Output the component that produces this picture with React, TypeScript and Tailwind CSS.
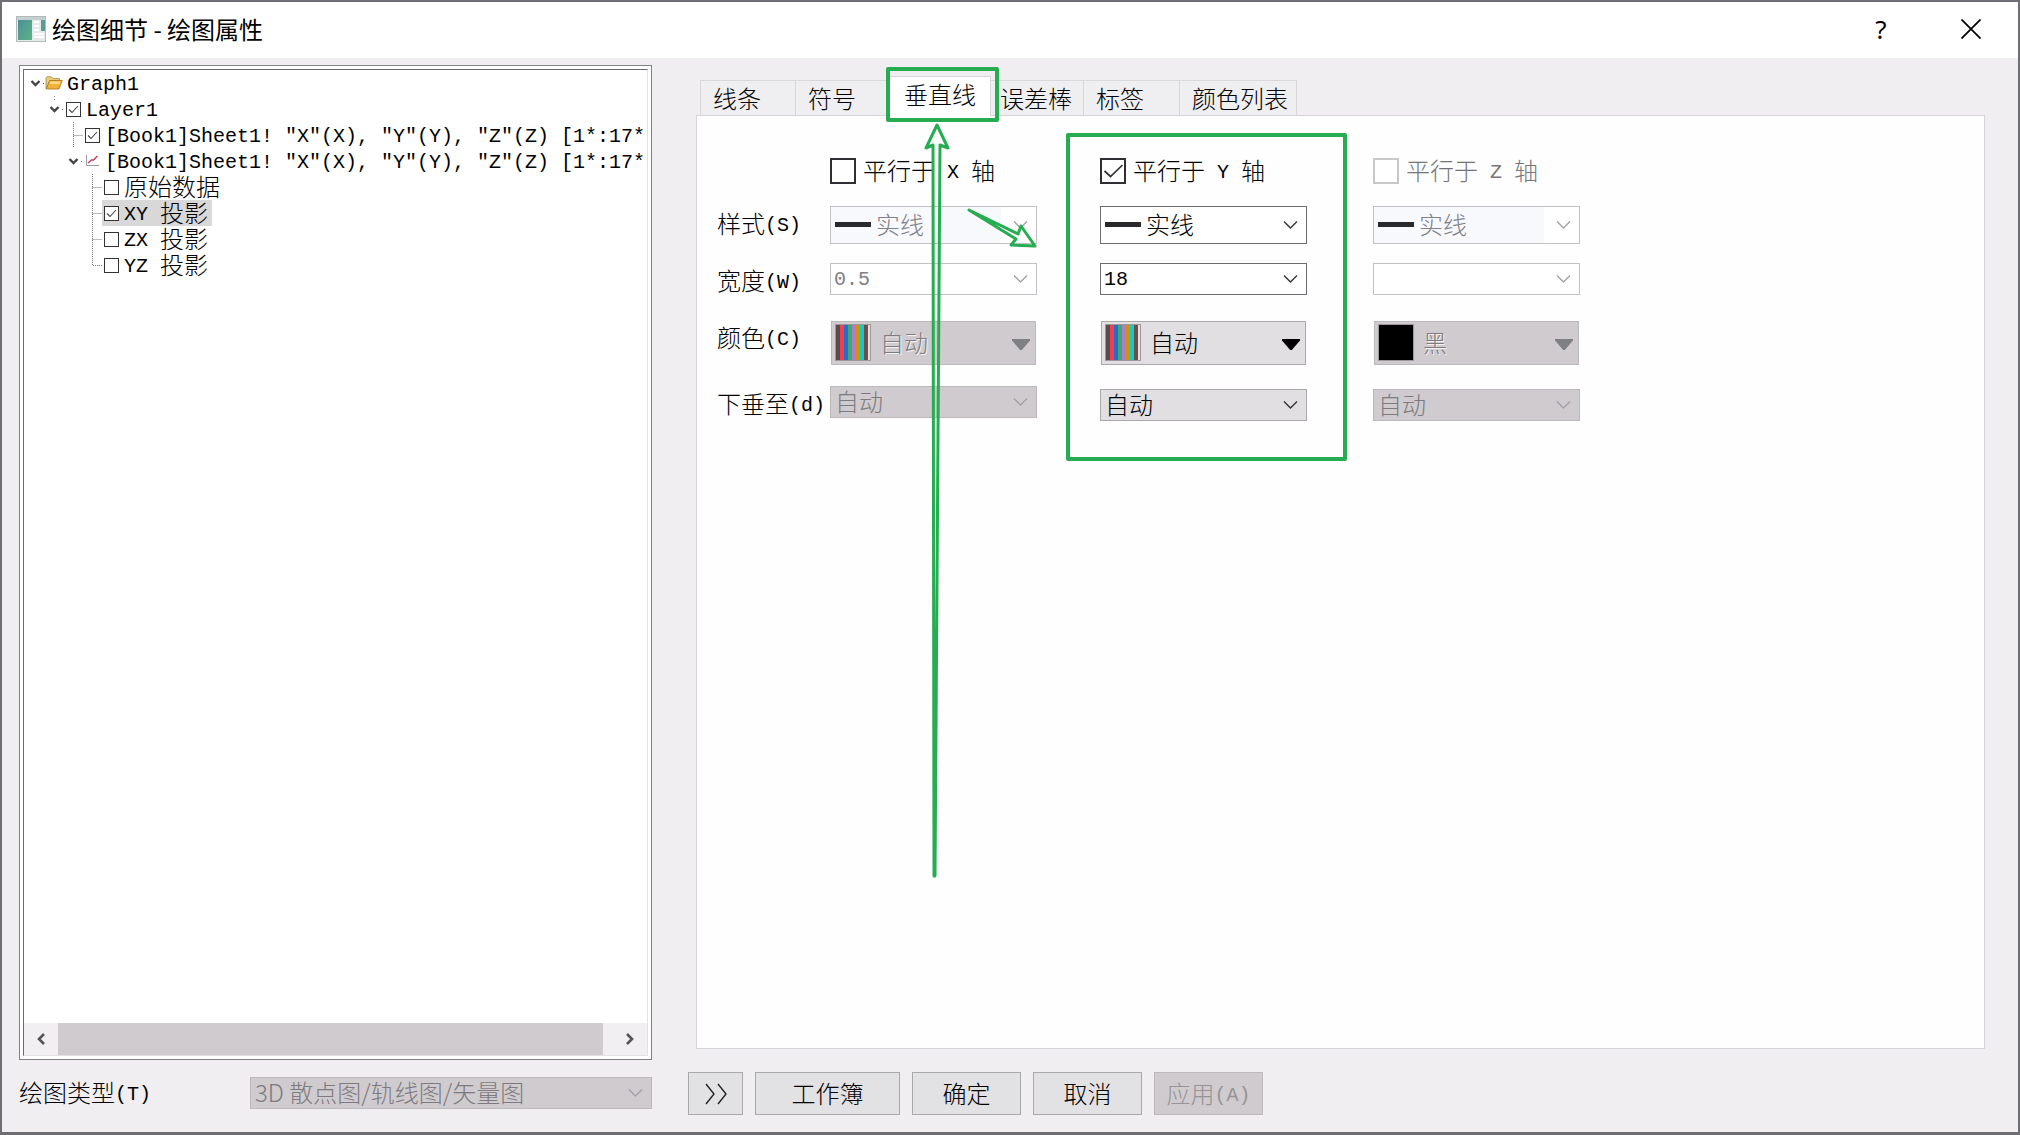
import React from "react";

const CJK_RUN = /([\u3000-\u9fff]+)/;

/* Latin cells are half as wide as the ideographs, as in a terminal-style dialog font. */
function Txt({ children }: { children: string }) {
  return (
    <span className="inline-flex h-[26px] items-center align-middle whitespace-pre leading-[26px]">
      {children.split(CJK_RUN).map((run, i) =>
        run === "" ? null : i % 2 === 1 ? (
          <span key={i} className="pb-[2px] font-['Noto_Sans_CJK_SC',sans-serif] text-[24px] font-light leading-6">
            {run}
          </span>
        ) : (
          <span key={i} className="pt-1 font-['Liberation_Mono','Noto_Sans_CJK_SC',monospace] text-[20px] leading-6">
            {run}
          </span>
        ),
      )}
    </span>
  );
}

function Chevron({ className }: { className: string }) {
  return (
    <svg className={`pointer-events-none absolute top-1/2 right-[9px] -translate-y-1/2 ${className}`} width="15" height="10" viewBox="0 0 15 10" fill="none" stroke="currentColor" strokeWidth="1.4">
      <path d="M1 1.5 L7.5 8 L14 1.5" />
    </svg>
  );
}

function Triangle({ className }: { className: string }) {
  return (
    <svg className={`pointer-events-none absolute top-[18px] right-[6px] ${className}`} width="18" height="11" viewBox="0 0 18 11" fill="currentColor">
      <path d="M0 0 H18 V1.5 L9.8 11 H8.2 L0 1.5 Z" />
    </svg>
  );
}

const STRIPES = ["#5c4a4a", "#ee4050", "#2a6cc4", "#3fa878", "#b07ccc", "#cf930f", "#1fc6bd", "#6b5050", "#ecdcdc"];

function Swatch({ kind }: { kind: "auto" | "black" }) {
  return (
    <svg className="pointer-events-none absolute top-[3px] left-[4px]" width="36" height="37" viewBox="0 0 36 37">
      <rect x="0.5" y="0.5" width="35" height="36" fill={kind === "black" ? "#000" : "#e6d8d8"} stroke="#9b979a" />
      {kind === "auto" && STRIPES.map((c, i) => <rect key={c} x={1 + i * 4} y="1" width={i === 8 ? 2 : 4} height="35" fill={c} />)}
    </svg>
  );
}

type PickProps = {
  label: string;
  value: string;
  kind?: "line" | "edit" | "color" | "list";
  disabled?: boolean;
  swatch?: "auto" | "black";
};

function Pick({ label, value, kind = "list", disabled = false, swatch = "auto" }: PickProps) {
  const height = kind === "line" ? "h-[38px]" : kind === "color" ? "h-[44px]" : "h-[32px]";
  const pad =
    kind === "line" ? "pl-[45px] pb-[2px]" : kind === "color" ? "pl-12 pb-[2px]" : kind === "edit" ? "pl-[3px] pt-[2px]" : "pl-1 pb-[2px]";
  const font = kind === "edit" ? "text-[20px] font-['Liberation_Mono',monospace]" : "text-[24px] font-light font-['Noto_Sans_CJK_SC',sans-serif]";
  const flat = kind === "line" || kind === "edit";
  const colors = flat
    ? disabled
      ? "border-[#c3c1c6] text-[#808086]"
      : "bg-white border-[#6c6b70] text-black"
    : disabled
      ? "bg-[#cfcbce] border-[#bcb8bb] text-[#7d7b80]"
      : "bg-[#e1dfe2] border-[#aaa8ab] text-black";
  const tint = flat && disabled ? (kind === "line" ? "bg-[linear-gradient(to_right,#f7f9fd_170px,#ffffff_170px)]" : "bg-white") : "";
  return (
    <div className={`relative ${kind === "color" ? "mx-px" : ""}`}>
      <select
        aria-label={label}
        disabled={disabled}
        defaultValue={value}
        className={`block w-full appearance-none rounded-none border pr-7 leading-[28px] opacity-100 outline-none ${height} ${pad} ${font} ${colors} ${tint} ${kind === "color" && disabled ? "[text-shadow:1px_1px_0_#f4f2f4]" : ""}`}
      >
        <option>{value}</option>
      </select>
      {kind === "line" && <span className="pointer-events-none absolute top-4 left-[5px] h-[5px] w-9 bg-[#2a2a2d]" />}
      {kind === "color" && <Swatch kind={swatch} />}
      {kind === "color" ? (
        <Triangle className={disabled ? "text-[#808084]" : "text-black"} />
      ) : (
        <Chevron className={disabled ? "text-[#a3a1a6]" : "text-[#333]"} />
      )}
    </div>
  );
}

function Tick({ label, checked = false, disabled = false }: { label: string; checked?: boolean; disabled?: boolean }) {
  return (
    <label className={`flex h-[26px] items-center gap-[7px] ${disabled ? "text-[#77757a]" : "text-black"}`}>
      <span className="relative size-[26px] shrink-0">
        <input
          type="checkbox"
          defaultChecked={checked}
          disabled={disabled}
          className={`block size-[26px] appearance-none border-2 bg-white ${disabled ? "border-[#c9c7ca]" : "border-[#2f2e33]"}`}
        />
        {checked && (
          <svg className="pointer-events-none absolute inset-0" width="26" height="26" viewBox="0 0 26 26" fill="none" stroke="#333" strokeWidth="1.7">
            <path d="M4.5 13 L10.5 18.5 L22.5 7" />
          </svg>
        )}
      </span>
      <Txt>{label}</Txt>
    </label>
  );
}

type Node = {
  text: string;
  level: number;
  lead: "open" | "branch" | "last";
  icon: "folder" | "on" | "off" | "plot";
  selected?: boolean;
};

const NODES: Node[] = [
  { text: "Graph1", level: 0, lead: "open", icon: "folder" },
  { text: "Layer1", level: 1, lead: "open", icon: "on" },
  { text: '[Book1]Sheet1! "X"(X), "Y"(Y), "Z"(Z) [1*:17*', level: 2, lead: "branch", icon: "on" },
  { text: '[Book1]Sheet1! "X"(X), "Y"(Y), "Z"(Z) [1*:17*', level: 2, lead: "open", icon: "plot" },
  { text: "原始数据", level: 3, lead: "branch", icon: "off" },
  { text: "XY 投影", level: 3, lead: "branch", icon: "on", selected: true },
  { text: "ZX 投影", level: 3, lead: "branch", icon: "off" },
  { text: "YZ 投影", level: 3, lead: "last", icon: "off" },
];

const INDENT = ["pl-[2px]", "pl-[21px]", "pl-[40px]", "pl-[59px]"];

function TreeIcon({ icon, text }: { icon: Node["icon"]; text: string }) {
  if (icon === "folder")
    return (
      <svg width="18" height="14" viewBox="0 0 18 14">
        <path d="M1 12.5 V2 L2 0.8 H6.5 L8 2.5 H14.5 V5 H5 Z" fill="#e9cf7c" stroke="#a98a3c" strokeWidth="0.8" />
        <path d="M4.5 4.5 H17.3 L14 13 H1.3 Z" fill="#f0b03c" stroke="#a87417" strokeWidth="0.8" />
        <path d="M5.5 5.6 H15.5 L14.6 8 H4.5 Z" fill="#fbd98a" />
      </svg>
    );
  if (icon === "plot")
    return (
      <svg width="14" height="12" viewBox="0 0 14 12" fill="none" className="mx-[2px]">
        <path d="M1.5 0 V10.5 H14" stroke="#9a98a0" strokeWidth="1" />
        <path d="M3 8 L6.5 5 L8.5 5 L12.5 1" stroke="#c2405a" strokeWidth="1.4" />
      </svg>
    );
  return (
    <span className="relative mx-[2px] size-[15px]">
      <input type="checkbox" aria-label={text} defaultChecked={icon === "on"} className="block size-[15px] appearance-none border border-[#333] bg-white" />
      {icon === "on" && (
        <svg className="pointer-events-none absolute inset-0" width="15" height="15" viewBox="0 0 15 15" fill="none" stroke="#444" strokeWidth="1.1">
          <path d="M3 7.5 L6 10.5 L12 4" />
        </svg>
      )}
    </span>
  );
}

function TreeRow({ node }: { node: Node }) {
  return (
    <li className={`flex h-[26px] ${INDENT[node.level]}`}>
      <svg className="shrink-0" width="19" height="26" viewBox="0 0 19 26" fill="none">
        {node.lead === "open" ? (
          <>
            <path d="M5.5 11 L9.5 15 L13.5 11" stroke="#444" strokeWidth="2.4" />
            <path d="M17.5 13 V14" stroke="#666" />
            {node.level === 1 && <path d="M9.5 0 V5" stroke="#888" strokeDasharray="1 2" />}
          </>
        ) : (
          <path d={node.lead === "last" ? "M9.5 0 V13.5 H19" : "M9.5 0 V26 M9.5 13.5 H19"} stroke="#777" strokeDasharray="1 1" />
        )}
      </svg>
      <span className={`flex items-center ${node.selected ? "bg-[#d8d8d8] pr-1" : ""}`}>
        <span className="flex w-[22px] shrink-0 items-center">
          <TreeIcon icon={node.icon} text={node.text} />
        </span>
        <Txt>{node.text}</Txt>
      </span>
    </li>
  );
}

const TABS = ["线条", "符号", "垂直线", "误差棒", "标签", "颜色列表"];

function Tab({ name }: { name: string }) {
  if (name === "垂直线")
    return (
      <div className="relative z-10 -mx-[3px] -mb-px">
        <button role="tab" aria-selected="true" className="block h-10 w-[102px] border border-b-0 border-[#d9d7da] bg-white pb-1">
          <Txt>{name}</Txt>
        </button>
        <div className="pointer-events-none absolute -top-[9px] -right-2 -bottom-[6px] -left-[3px] rounded-[2px] border-4 border-[#27ad51]" />
      </div>
    );
  return (
    <button role="tab" aria-selected="false" className="h-[35px] min-w-24 border-t border-r border-[#d9d7da] bg-[#efeef0] pt-[2px] pl-3 text-left first:border-l last:pr-2">
      <Txt>{name}</Txt>
    </button>
  );
}

function Push({ children, className = "w-[109px]", disabled = false }: { children: React.ReactNode; className?: string; disabled?: boolean }) {
  return (
    <button
      disabled={disabled}
      className={`flex h-[43px] items-center justify-center border ${className} ${disabled ? "border-[#bcb8bb] bg-[#cfcbce] text-[#969397]" : "border-[#aaa8ab] bg-[#e2e1e4] text-black"}`}
    >
      {children}
    </button>
  );
}

export default function App() {
  return (
    <div className="flex min-h-screen flex-col border-2 border-b-[3px] border-[#6f6e73] bg-[#f0eef1] text-black">
      <header className="flex h-14 items-center bg-white pb-[2px] pl-[14px]">
        <svg width="30" height="26" viewBox="0 0 30 26">
          <defs>
            <linearGradient id="pane" x1="0" y1="0" x2="1" y2="1">
              <stop offset="0" stopColor="#4f8f9a" />
              <stop offset="1" stopColor="#5bb385" />
            </linearGradient>
          </defs>
          <rect x="0.5" y="0.5" width="29" height="25" fill="#e4eae9" stroke="#b3b9b9" />
          <rect x="1" y="1" width="28" height="3" fill="#c6d0d2" />
          <rect x="2" y="4" width="14" height="20" fill="url(#pane)" />
          <path d="M18 6 H23 M18 10 H23 M18 14 H23 M18 18 H28 M18 21 H28" stroke="#fff" strokeWidth="2" />
          <rect x="25" y="4" width="4" height="11" fill="#5a9c94" />
        </svg>
        <h1 className="ml-[6px] flex-1 font-['Noto_Sans_CJK_SC',sans-serif] text-[24px] leading-8">绘图细节 - 绘图属性</h1>
        <button aria-label="帮助" className="w-12 font-['Noto_Sans',sans-serif] text-[26px] leading-8">?</button>
        <button aria-label="关闭" className="mr-[35px] ml-[54px] flex h-8 w-6 items-center justify-center">
          <svg width="20" height="20" viewBox="0 0 20 20" stroke="#000" strokeWidth="1.8">
            <path d="M0.5 0.5 L19.5 19.5 M19.5 0.5 L0.5 19.5" />
          </svg>
        </button>
      </header>

      <main className="flex flex-1 gap-9 pt-[7px] pr-[33px] pl-[17px]">
        <section className="flex w-[633px] shrink-0 flex-col pb-[23px]">
          <div className="flex flex-1 flex-col border border-[#828187] bg-white p-[3px]">
            <div className="flex flex-1 flex-col overflow-hidden border border-t-[#69686d] border-r-[#e3e1e4] border-b-[#e3e1e4] border-l-[#69686d]">
              <ul className="flex-1 overflow-hidden">
                {NODES.map((n, i) => (
                  <TreeRow key={i} node={n} />
                ))}
              </ul>
              <div className="flex h-8 bg-[#f1eff1]">
                <button aria-label="向左滚动" className="flex w-[34px] items-center justify-center">
                  <svg width="10" height="12" viewBox="0 0 10 12" fill="none" stroke="#555" strokeWidth="2.6">
                    <path d="M8 1 L3 6 L8 11" />
                  </svg>
                </button>
                <div className="mr-[10px] flex-1 bg-[#cfcbce]" />
                <button aria-label="向右滚动" className="flex w-[34px] items-center justify-center">
                  <svg width="10" height="12" viewBox="0 0 10 12" fill="none" stroke="#555" strokeWidth="2.6">
                    <path d="M2 1 L7 6 L2 11" />
                  </svg>
                </button>
              </div>
            </div>
          </div>
          <div className="mt-[17px] flex h-8 items-center">
            <span className="w-[231px]">
              <Txt>绘图类型(T)</Txt>
            </span>
            <div className="flex-1">
              <Pick label="绘图类型(T)" value="3D 散点图/轨线图/矢量图" disabled />
            </div>
          </div>
        </section>

        <section className="flex min-w-0 flex-1 flex-col pb-[17px]">
          <div role="tablist" className="ml-3 flex h-[50px] items-end">
            {TABS.map((t) => (
              <Tab key={t} name={t} />
            ))}
          </div>

          <div className="relative ml-2 flex-1 border border-[#d6d4d8] bg-[#fefefe] pt-[42px] pl-5">
            <div className="flex">
              <div className="flex w-[113px] flex-col">
                <div className="mt-[53px] flex"><Txt>样式(S)</Txt></div>
                <div className="mt-[31px] flex"><Txt>宽度(W)</Txt></div>
                <div className="mt-[31px] flex"><Txt>颜色(C)</Txt></div>
                <div className="mt-10 flex"><Txt>下垂至(d)</Txt></div>
              </div>

              <fieldset className="flex w-[207px] flex-col">
                <Tick label="平行于 X 轴" />
                <div className="mt-[22px]"><Pick kind="line" label="X 样式" value="实线" disabled /></div>
                <div className="mt-[19px]"><Pick kind="edit" label="X 宽度" value="0.5" disabled /></div>
                <div className="mt-[26px]"><Pick kind="color" label="X 颜色" value="自动" disabled /></div>
                <div className="mt-[21px]"><Pick label="X 下垂至" value="自动" disabled /></div>
              </fieldset>

              <fieldset className="relative ml-[63px] flex w-[207px] flex-col">
                <Tick label="平行于 Y 轴" checked />
                <div className="mt-[22px]"><Pick kind="line" label="Y 样式" value="实线" /></div>
                <div className="mt-[19px]"><Pick kind="edit" label="Y 宽度" value="18" /></div>
                <div className="mt-[26px]"><Pick kind="color" label="Y 颜色" value="自动" /></div>
                <div className="mt-6"><Pick label="Y 下垂至" value="自动" /></div>
                <div className="pointer-events-none absolute -top-[25px] -right-10 -bottom-10 -left-[34px] rounded-[2px] border-4 border-[#27ad51]" />
              </fieldset>

              <fieldset className="ml-[66px] flex w-[207px] flex-col">
                <Tick label="平行于 Z 轴" disabled />
                <div className="mt-[22px]"><Pick kind="line" label="Z 样式" value="实线" disabled /></div>
                <div className="mt-[19px]"><Pick kind="edit" label="Z 宽度" value="" disabled /></div>
                <div className="mt-[26px]"><Pick kind="color" label="Z 颜色" value="黑" swatch="black" disabled /></div>
                <div className="mt-6"><Pick label="Z 下垂至" value="自动" disabled /></div>
              </fieldset>
            </div>

            <svg className="pointer-events-none absolute top-1 left-[220px]" width="130" height="764" viewBox="917 120 130 764" fill="none" stroke="#27ad51" strokeWidth="3" strokeLinejoin="round">
              <path d="M934 876 L933 145 L926 148 L937 125 L948 148 L940 145 L935 876 Z" />
              <path d="M969 210 L1018 234 L1021 226 L1035 246 L1011 245 L1016 239 Z" />
            </svg>
          </div>

          <div className="mt-[23px] flex gap-3">
            <Push className="w-[55px]">
              <svg aria-label="展开" width="22" height="22" viewBox="0 0 22 22" fill="none" stroke="#222" strokeWidth="1.4">
                <path d="M1 1 L9 11 L1 21 M13 1 L21 11 L13 21" />
              </svg>
            </Push>
            <Push className="w-[145px]"><Txt>工作簿</Txt></Push>
            <Push><Txt>确定</Txt></Push>
            <Push><Txt>取消</Txt></Push>
            <Push disabled><Txt>应用(A)</Txt></Push>
          </div>
        </section>
      </main>
    </div>
  );
}
